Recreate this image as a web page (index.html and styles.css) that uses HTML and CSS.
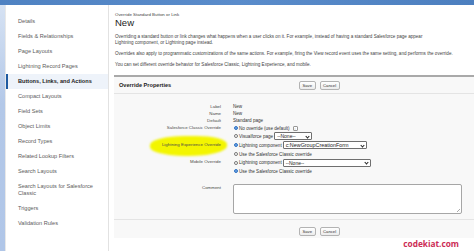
FILE: index.html
```html
<!DOCTYPE html>
<html>
<head>
<meta charset="utf-8">
<link rel="stylesheet" href="styles.css">
</head>
<body>
<div class="topbar"></div>
<div class="layout">
  <div class="strip"></div>
  <nav class="sidebar">
    <ul class="nav">
      <li>Details</li>
      <li>Fields &amp; Relationships</li>
      <li>Page Layouts</li>
      <li>Lightning Record Pages</li>
      <li class="active">Buttons, Links, and Actions</li>
      <li>Compact Layouts</li>
      <li>Field Sets</li>
      <li>Object Limits</li>
      <li>Record Types</li>
      <li>Related Lookup Filters</li>
      <li>Search Layouts</li>
      <li>Search Layouts for Salesforce Classic</li>
      <li>Triggers</li>
      <li>Validation Rules</li>
    </ul>
  </nav>
  <main class="content">
    <div class="crumb">Override Standard Button or Link</div>
    <h1 class="title">New</h1>
    <p class="desc">Overriding a standard button or link changes what happens when a user clicks on it. For example, instead of having a standard Salesforce page appear<br>Lightning component, or Lightning page instead.</p>
    <p class="desc">Overrides also apply to programmatic customizations of the same actions. For example, firing the View record event uses the same setting, and performs the override.</p>
    <p class="desc">You can set different override behavior for Salesforce Classic, Lightning Experience, and mobile.</p>

    <section class="panel">
      <div class="panel-head">
        <div class="panel-title">Override Properties</div>
        <div class="btns"><span class="btn">Save</span><span class="btn">Cancel</span></div>
      </div>
      <div class="form">
        <div class="lbl">Label</div><div class="val">New</div>
        <div class="lbl">Name</div><div class="val">New</div>
        <div class="lbl">Default</div><div class="val">Standard page</div>

        <div class="lbl">Salesforce Classic Override</div>
        <div class="val opts">
          <div class="opt h8"><span class="radio on"></span>No override (use default)<span class="info">i</span></div>
          <div class="opt h8"><span class="radio"></span>Visualforce page<span class="select s1">--None--<span class="chev"></span></span></div>
        </div>

        <div class="lbl hl"><span class="mark"></span><span class="lbltext">Lightning Experience Override</span></div>
        <div class="val opts">
          <div class="opt h10"><span class="radio on"></span>Lightning component<span class="select s2">c:NewGroupCreationForm<span class="chev"></span></span></div>
          <div class="opt h8"><span class="radio"></span>Use the Salesforce Classic override</div>
        </div>

        <div class="lbl">Mobile Override</div>
        <div class="val opts">
          <div class="opt h9"><span class="radio"></span>Lightning component<span class="select s3">--None--<span class="chev"></span></span></div>
          <div class="opt h8"><span class="radio on"></span>Use the Salesforce Classic override</div>
        </div>

        <div class="lbl comment">Comment</div>
        <div class="val comment"><div class="textarea"><span class="grip"></span></div></div>
      </div>
      <div class="panel-foot">
        <div class="btns"><span class="btn">Save</span><span class="btn">Cancel</span></div>
      </div>
    </section>
    <div class="watermark">codekiat.com</div>
  </main>
</div>
</body>
</html>
```
FILE: styles.css
```css
* { box-sizing: border-box; }
html, body { margin: 0; padding: 0; }
body {
  width: 474px;
  height: 251px;
  overflow: hidden;
  font-family: "Liberation Sans", Arial, sans-serif;
  color: #333;
  background: #fff;
}
.topbar {
  height: 5px;
  background: linear-gradient(90deg, #4f82c2, #5a8ccb 50%, #4c7fbf);
}
.layout {
  display: flex;
  height: 246px;
}
.strip {
  width: 5px;
  flex: none;
  background: linear-gradient(180deg, #d6e2f3, #b3c8e8 40%, #b0c6e8);
}
.sidebar {
  width: 104px;
  flex: none;
  background: #fff;
  border-right: 1px solid #e2e2e2;
  border-left: 1px solid #e8e8e8;
}
.nav {
  list-style: none;
  margin: 0;
  padding: 9px 10px 0 0;
}
.nav li {
  font-size: 5.6px;
  line-height: 7px;
  padding: 4px 0 4px 10px;
  color: #5c5c5c;
  border-left: 2px solid transparent;
}
.nav li.active {
  background: #eef3fa;
  border-left-color: #1f5aa0;
  color: #222;
  font-weight: bold;
  margin-right: -10px;
}
.content {
  flex: 1;
  min-width: 0;
  padding: 0 0 0 5px;
}
.crumb {
  font-size: 4.4px;
  color: #444;
  margin-top: 7px;
  line-height: 6px;
  padding-left: 1px;
}
.title {
  font-size: 9.5px;
  font-weight: normal;
  margin: 0;
  line-height: 10px;
  color: #222;
  padding-left: 1px;
}
.desc {
  font-size: 4.6px;
  line-height: 6px;
  margin: 5px 0 0;
  white-space: nowrap;
  color: #444;
  padding-left: 1px;
}
.desc:first-of-type { margin-top: 6px; }
.panel {
  margin-top: 7px;
  border-top: 2px solid #a9a9a9;
  background: #f8f8f8;
}
.panel-head {
  display: flex;
  align-items: center;
  height: 17px;
  border-bottom: 1px solid #e4e4e4;
}
.panel-title {
  width: 185px;
  padding-left: 5px;
  font-size: 5.6px;
  font-weight: bold;
  color: #222;
}
.btns { display: flex; gap: 4px; }
.btn {
  font-size: 4.2px;
  height: 9px;
  line-height: 7px;
  padding: 0 2.5px;
  border: 1px solid #b3b3b3;
  border-radius: 2px;
  background: linear-gradient(#fff, #ececec);
  color: #333;
}
.form {
  display: grid;
  grid-template-columns: 107px 1fr;
  column-gap: 12px;
  padding-top: 9px;
  padding-bottom: 5px;
  font-size: 4.6px;
}
.lbl {
  text-align: right;
  color: #4a4a4a;
  line-height: 7px;
  font-size: 4.4px;
}
.val { line-height: 7px; color: #333; }
.opts { display: flex; flex-direction: column; }
.opt {
  display: flex;
  align-items: center;
  white-space: nowrap;
}
.h8 { height: 8px; }
.h9 { height: 9px; }
.h10 { height: 10px; }
.lbl:has(+ .opts) { line-height: 8px; }
.hl { position: relative; line-height: 10px !important; }
.mark {
  position: absolute;
  left: 36px;
  right: -6px;
  top: -4px;
  height: 20px;
  background: #f3f500;
  border-radius: 45% 40% 50% 45%;
  filter: blur(0.8px);
}
.lbltext { position: relative; }
.radio {
  width: 4px;
  height: 4px;
  border-radius: 50%;
  border: 0.6px solid #777;
  background: #fff;
  margin: 0 1px 0 1px;
  flex: none;
}
.radio.on {
  border-color: #2a6fc4;
  background: radial-gradient(circle, #fff 0 0.5px, #2f7ad2 0.8px);
}
.info {
  display: inline-block;
  width: 5px;
  height: 5px;
  margin-left: 3px;
  border: 0.6px solid #999;
  border-radius: 1px;
  font-size: 3px;
  line-height: 4px;
  text-align: center;
  color: #888;
  background: #fff;
}
.select {
  position: relative;
  display: inline-block;
  height: 8px;
  line-height: 6.6px;
  margin-left: 1px;
  padding-left: 2px;
  border: 0.7px solid #6f6f6f;
  border-radius: 1px;
  background: #fff;
  color: #222;
  font-size: 5px;
}
.s1 { width: 38px; }
.s2 { width: 84px; font-size: 5.4px; }
.s3 { width: 88px; }
.chev {
  position: absolute;
  right: 2px;
  top: 1.5px;
  width: 3px;
  height: 3px;
  border-right: 1px solid #222;
  border-bottom: 1px solid #222;
  transform: rotate(45deg);
}
.lbl.comment, .val.comment { margin-top: 9px; }
.textarea {
  position: relative;
  width: 229px;
  height: 30px;
  border: 1px solid #a6a6a6;
  border-radius: 2px;
  background: #fff;
}
.grip {
  position: absolute;
  right: 1px;
  bottom: 1px;
  width: 3px;
  height: 3px;
  background: linear-gradient(135deg, transparent 45%, #aaa 50%, transparent 60%, transparent 70%, #aaa 75%, transparent 85%);
}
.panel-foot {
  border-top: 1px solid #e4e4e4;
  padding: 7px 0 2px 185px;
}
.watermark {
  text-align: right;
  padding-right: 15px;
  margin-top: 1px;
  font-size: 8.3px;
  line-height: 10px;
  font-weight: bold;
  color: #cc2d55;
  font-family: "Open Sans", "Liberation Sans", sans-serif;
}
```
